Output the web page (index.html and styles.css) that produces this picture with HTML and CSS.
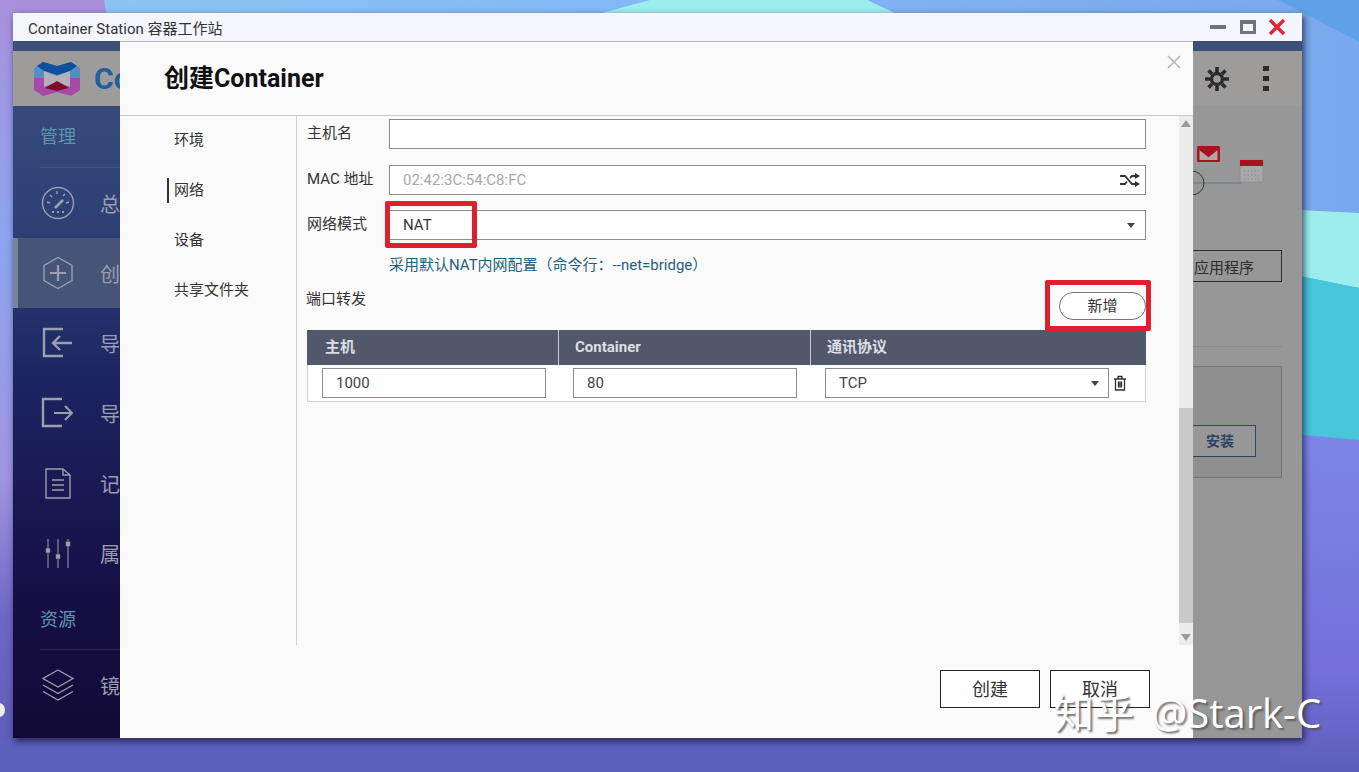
FILE: index.html
```html
<!DOCTYPE html>
<html lang="zh">
<head>
<meta charset="utf-8">
<title>Container Station</title>
<link rel="stylesheet" href="styles.css">
</head>
<body>
<div class="desktop">
  <svg class="wallpaper" viewBox="0 0 1359 772" preserveAspectRatio="none">
    <defs>
      <linearGradient id="wl" x1="0" y1="0" x2="0" y2="1">
        <stop offset="0" stop-color="#a98fdc"/>
        <stop offset=".3" stop-color="#8ca4f0"/>
        <stop offset=".62" stop-color="#a094e0"/>
        <stop offset=".8" stop-color="#6e66c6"/>
        <stop offset="1" stop-color="#5a5cb8"/>
      </linearGradient>
      <linearGradient id="wt" x1="0" y1="0" x2="1" y2="0">
        <stop offset="0" stop-color="#8cc4f4"/>
        <stop offset=".4" stop-color="#84b8f4"/>
        <stop offset="1" stop-color="#7aa8ec"/>
      </linearGradient>
      <linearGradient id="wb" x1="0" y1="0" x2="0" y2="1">
        <stop offset="0" stop-color="#7c86e6"/>
        <stop offset=".7" stop-color="#7570da"/>
        <stop offset="1" stop-color="#5d5ebc"/>
      </linearGradient>
    </defs>
    <rect width="1359" height="772" fill="url(#wl)"/>
    <polygon points="104,0 1359,0 1359,500 200,500" fill="url(#wt)"/>
    <polygon points="650,0 867,0 897,14 598,14" fill="#9ceeee"/>
    <polygon points="1278,0 1359,0 1359,42 1302,12" fill="#5fa0e8"/>
    <polygon points="1280,209 1359,213 1359,288 1280,272" fill="#9ceeee"/>
    <polygon points="1280,272 1359,288 1359,440 1280,433" fill="#48c6da"/>
    <polygon points="1280,433 1359,440 1359,772 1280,772" fill="url(#wb)"/>
    <rect y="738" width="1280" height="34" fill="#5d60bc"/>
  </svg>

  <div class="window">
    <header class="titlebar">
      <span class="title">Container Station 容器工作站</span>
      <div class="win-controls">
        <svg class="wc" viewBox="0 0 20 20"><rect x="1" y="8" width="16" height="4" fill="#6f7480"/></svg>
        <svg class="wc" viewBox="0 0 20 20"><path d="M2 3h16v14H2z M5 7v7h10V7z" fill="#6f7480" fill-rule="evenodd"/></svg>
        <svg class="wc" viewBox="0 0 20 20"><path d="M3 3l14 14M17 3L3 17" stroke="#e2252f" stroke-width="3.4" fill="none"/></svg>
      </div>
    </header>

    <div class="app">
      <aside class="sidebar">
        <div class="side-head">管理</div>
        <div class="side-item"><svg class="si" viewBox="0 0 36 36"><circle cx="18" cy="18" r="15.500"/><path d="M15 23l8-8" stroke-width="2.600"/><path d="M7 17l3 1M10 10l2 2M17 6v3M25 9l-2 2M29 17l-3 1"/><path d="M12 27h2M17 27h2M22 27h2" stroke-width="2"/></svg><span>总览</span></div>
        <div class="side-item active"><svg class="si" viewBox="0 0 36 36"><path d="M18 2.500l14 8v15l-14 8-14-8v-15z"/><path d="M18 10v16M10 18h16" stroke-width="2.200"/></svg><span>创建</span></div>
        <div class="side-item"><svg class="si" viewBox="0 0 36 36"><path d="M23 4H4v27h19" stroke-width="2.400"/><path d="M32 18H13M20 11l-7 7 7 7" stroke-width="2.400"/></svg><span>导入</span></div>
        <div class="side-item"><svg class="si" viewBox="0 0 36 36"><path d="M22 4H3v27h19" stroke-width="2.400"/><path d="M14 18h18M25 11l7 7-7 7" stroke-width="2"/></svg><span>导出</span></div>
        <div class="side-item"><svg class="si" viewBox="0 0 36 36"><path d="M6 4h17l7 6v23H6z"/><path d="M23 4v6h7"/><path d="M12 15h12M12 20h12M12 25h12"/></svg><span>记录</span></div>
        <div class="side-item"><svg class="si" viewBox="0 0 36 36"><path d="M8 4v9M8 18v15M18 4v15M18 24v9M28 4v3M28 11v22" stroke-width="1"/><path d="M6.500 14h3v3h-3zM16.500 20h3v3h-3zM26.500 7.500h3v3h-3z" fill="#9a9eae"/></svg><span>属性</span></div>
        <div class="side-head res">资源</div>
        <div class="side-item"><svg class="si" viewBox="0 0 36 36"><path d="M18 3l15 8.500-15 8.500L3 11.500z"/><path d="M3 18l15 8.500L33 18M3 24.500L18 33l15-8.500"/></svg><span>镜像</span></div>
      </aside>

      <main class="main">
        <div class="main-strip"></div>
        <div class="main-head">
          <svg class="logo" viewBox="0 0 46 34">
            <path d="M0 6l9-6 14 4 14-4 9 6v10H0z" fill="#5a8cc4"/>
            <path d="M0 16h46v12l-9 6-14-4-14 4-9-6z" fill="#a64aa8"/>
            <path d="M3 4l6-4 14 4 14-4 6 4-7 5-13 4-13-4z" fill="#0d4f9c"/>
            <path d="M10 9l13 5 13-5v16l-13-5-13 5z" fill="#b5b0b8"/>
            <path d="M11 26l12-7 12 7-12 3z" fill="#7d0b2f"/>
          </svg>
          <span class="brand">Container Station</span>
          <svg class="gear" viewBox="0 0 26 26"><path d="M13 7.500a5.500 5.500 0 1 0 0 11 5.500 5.500 0 0 0 0-11z" fill="none" stroke="#2b2b2d" stroke-width="3.400"/><path d="M13 1v5M13 20v5M1 13h5M20 13h5M4.500 4.500l3.500 3.500M18 18l3.500 3.500M21.500 4.500L18 8M8 18l-3.500 3.500" stroke="#2b2b2d" stroke-width="3.600"/></svg>
          <div class="kebab"><i></i><i></i><i></i></div>
        </div>
        <div class="main-body">
          <div class="flow-icons">
            <svg class="flow-svg" viewBox="0 0 80 50">
              <path d="M0 38h50" stroke="#5c7d8c" fill="none"/>
              <path d="M1 26a12 12 0 0 1 0 24" stroke="#333" fill="none"/>
              <rect x="6" y="1" width="23" height="16" rx="1.500" fill="#a7141e"/>
              <path d="M8.500 4l9 6.500 9-6.500v11h-18z" fill="#b3a6a6"/>
              <path d="M8.500 4l9 7 9-7" fill="none" stroke="#a7141e" stroke-width="2"/>
              <rect x="49" y="15" width="23" height="22" fill="#a8a8ac" stroke="#8f9096"/>
              <rect x="49" y="15" width="23" height="6" fill="#a7141e"/>
              <path d="M53 26h15M53 30h15M53 34h15" stroke="#888" stroke-dasharray="1.500 2"/>
            </svg>
          </div>
          <button class="ghost-btn" type="button">应用程序</button>
          <div class="rule"></div>
          <div class="card"><button class="install-btn" type="button">安装</button></div>
        </div>
      </main>

      <section class="modal">
        <header class="modal-head">
          <h1>创建Container</h1>
          <svg class="modal-close" viewBox="0 0 14 14"><path d="M1 1l12 12M13 1L1 13" stroke="#b4b4b4" stroke-width="1.500"/></svg>
        </header>
        <div class="modal-body">
          <nav class="tabs">
            <a>环境</a>
            <a class="on">网络</a>
            <a>设备</a>
            <a>共享文件夹</a>
          </nav>
          <div class="content">
            <div class="form-row first">
              <label>主机名</label>
              <div class="field"></div>
            </div>
            <div class="form-row mac">
              <label>MAC 地址</label>
              <div class="field muted">02:42:3C:54:C8:FC
                <svg class="shuffle" viewBox="0 0 20 14"><path d="M0 3h5l7 8h4M0 11h5l2-2.500M10 5l2-2h4" stroke="#333" stroke-width="1.800" fill="none"/><path d="M15 0l5 3-5 3zM15 8l5 3-5 3z" fill="#333"/></svg>
              </div>
            </div>
            <div class="form-row">
              <label>网络模式</label>
              <div class="field nat">NAT<i class="caret"></i></div>
            </div>
            <p class="hint">采用默认NAT内网配置（命令行：--net=bridge）</p>
            <div class="port-head">
              <span>端口转发</span>
              <button class="pill" type="button">新增</button>
            </div>
            <div class="table">
              <div class="thead">
                <div>主机</div>
                <div>Container</div>
                <div>通讯协议</div>
              </div>
              <div class="trow">
                <div class="cell"><div class="cell-input">1000</div></div>
                <div class="cell"><div class="cell-input">80</div></div>
                <div class="cell proto">
                  <div class="cell-input select">TCP<i class="caret"></i></div>
                  <svg class="trash" viewBox="0 0 14 16"><path d="M1 4h12M5 4V1.500h4V4M2.500 4v11h9V4M5.500 6.500v6M7 6.500v6M8.500 6.500v6" stroke="#333" stroke-width="1.300" fill="none"/></svg>
                </div>
              </div>
            </div>
          </div>
          <div class="scrollbar">
            <i class="arrow up"></i>
            <div class="track"><div class="thumb"></div></div>
            <i class="arrow down"></i>
          </div>
        </div>
        <footer class="modal-foot">
          <button class="foot-btn" type="button">创建</button>
          <button class="foot-btn" type="button">取消</button>
        </footer>
      </section>
    </div>
  </div>

  <div class="mark mark-nat"></div>
  <div class="mark mark-add"></div>
  <div class="watermark">知乎 @Stark-C</div>
  <div class="cursor-blob"></div>
</div>
</body>
</html>
```
FILE: styles.css
```css
* { box-sizing: border-box; }
html, body { margin: 0; padding: 0; }
body { font-family: Roboto, "Noto Sans CJK SC", sans-serif; color: #333; }

.desktop { position: relative; width: 1359px; height: 772px; overflow: hidden; background: #5d60bc; }
.wallpaper { position: absolute; inset: 0; width: 1359px; height: 772px; }

.window {
  position: absolute; left: 13px; top: 13px; width: 1289px; height: 725px;
  display: flex; flex-direction: column;
  box-shadow: 2px 3px 7px rgba(10, 10, 40, .7);
}
.titlebar {
  height: 28px; flex: none; display: flex; align-items: center; justify-content: space-between;
  padding: 0 15px 0 15px; background: #f3f6fc;
}
.title { font-size: 15px; color: #333; }
.win-controls { display: flex; gap: 9px; align-items: center; }
.wc { width: 20px; height: 20px; }

.app { position: relative; flex: 1; display: flex; min-height: 0; overflow: hidden; }

.sidebar {
  width: 120px; flex: none; overflow: hidden; white-space: nowrap;
  background: linear-gradient(#3c4f7e 0, #2c3f74 28%, #1c2360 50%, #160f45 80%, #120a35 100%);
  padding-top: 65px;
}
.side-head {
  height: 62px; margin-left: 27px; padding-top: 16px; font-size: 18px; line-height: 30px;
  color: #5f93b0; border-bottom: 1px solid rgba(255,255,255,.1);
}
.side-head.res { height: 62px; padding-top: 17px; }
.side-item {
  height: 70px; display: flex; align-items: center; padding-left: 27px; gap: 24px;
  font-size: 20px; color: #9a9eae;
}
.side-item.active { background: #465478; border-left: 5px solid #76849e; padding-left: 22px; }
.si { width: 36px; height: 36px; flex: none; fill: none; stroke: #9a9eae; stroke-width: 1.400; }

.main { flex: 1; display: flex; flex-direction: column; background: #979797; min-width: 0; }
.main-strip { height: 10px; flex: none; background: #3e4f78; margin-left: -120px; }
.main-head {
  height: 55px; flex: none; background: #9e9c9b; display: flex; align-items: center; position: relative;
  padding-right: 33px; margin-left: -120px;
}
.logo { width: 46px; height: 34px; margin-left: 21px; flex: none; }
.brand { margin-left: 14px; font-size: 30px; font-weight: 700; color: #1d5f9f; white-space: nowrap; }
.gear { width: 26px; height: 26px; margin-left: auto; }
.kebab { width: 6px; margin-left: 33px; display: flex; flex-direction: column; gap: 5px; }
.kebab i { display: block; width: 6px; height: 5px; background: #2b2b2d; }

.main-body { flex: 1; display: flex; flex-direction: column; align-items: flex-end; padding-right: 20px; }
.flow-icons { height: 53px; margin-top: 39px; width: 89px; }
.flow-svg { width: 80px; height: 50px; display: block; margin-left: -2px; }
.ghost-btn {
  width: 160px; height: 32px; margin-top: 52px; background: transparent; border: 1px solid #2c2c2c;
  font: 15px Roboto, "Noto Sans CJK SC", sans-serif; color: #2c2c2c; text-align: right; padding: 0 27px 0 0;
}
.rule { width: 160px; height: 1px; background: #8a8a8a; margin-top: 64px; }
.card {
  width: 160px; height: 112px; margin-top: 19px; background: #8f8f8f; border: 1px solid #70727a;
  display: flex; align-items: flex-end; justify-content: flex-end; padding: 0 25px 20px 0;
}
.install-btn {
  width: 72px; height: 32px; background: #979797; border: 1px solid #2f4368; padding: 0 0 2px;
  font: 700 14px Roboto, "Noto Sans CJK SC", sans-serif; color: #2f4368;
}

.modal {
  position: absolute; left: 107px; top: 0; width: 1073px; height: 697px;
  background: #fafafa; border-top: 1px solid #b5b5b5; display: flex; flex-direction: column;
}
.modal-head {
  height: 74px; flex: none; position: relative; display: flex; align-items: center; padding: 1px 0 0 44px;
  border-bottom: 1px solid #c8c8c8;
}
.modal-head h1 { margin: 0; font-size: 25px; font-weight: 700; color: #111; line-height: 30px; }
.modal-close { position: absolute; right: 12px; top: 13px; width: 14px; height: 14px; }

.modal-body { flex: none; height: 529px; display: flex; }
.tabs {
  width: 177px; flex: none; border-right: 1px solid #d0d0d0; padding-top: 1px;
  display: flex; flex-direction: column;
}
.tabs a {
  height: 50px; padding-left: 54px; font-size: 15px; line-height: 46px; color: #333; position: relative;
}
.tabs a.on::before {
  content: ""; position: absolute; left: 47px; top: 11px; width: 2px; height: 25px; background: #333;
}
.content { flex: 1; min-width: 0; padding: 3px 33px 0 10px; }
.form-row { display: flex; align-items: flex-start; margin-top: 15px; }
.form-row.first { margin-top: 0; }
.form-row.mac { margin-top: 16px; }
.form-row label { width: 82px; flex: none; font-size: 15px; line-height: 20px; padding-top: 4px; color: #333; }
.field {
  flex: 1; height: 30px; background: #fff; border: 1px solid #8c8c8c; padding: 0 13px;
  font-size: 15px; line-height: 28px; color: #333; position: relative;
}
.field.muted { color: #a8a8a8; }
.field.nat { line-height: 29px; }
.shuffle { position: absolute; right: 5px; top: 7px; width: 20px; height: 14px; }
.caret {
  position: absolute; right: 10px; top: 12px; width: 0; height: 0;
  border: 4px solid transparent; border-top: 5px solid #444; border-bottom: 0;
}
.hint { margin: 15px 0 0 82px; font-size: 15px; line-height: 20px; color: #1f5f80; }
.port-head { display: flex; justify-content: space-between; height: 28px; margin-top: 17px; font-size: 15px; line-height: 20px; }
.port-head span { margin-top: -3px; margin-left: -1px; }
.pill {
  width: 87px; height: 28px; border: 1px solid #777; border-radius: 14px; background: #fff;
  font: 15px Roboto, "Noto Sans CJK SC", sans-serif; color: #333; padding: 0 0 3px;
}
.table { margin-top: 10px; }
.thead { display: grid; grid-template-columns: 252px 252px 1fr; height: 35px; background: #50586a; }
.thead div {
  font-size: 15px; font-weight: 700; line-height: 34px; color: #dcdfe4; padding-left: 18px;
  border-right: 1px solid #c7ccd4;
}
.thead div:nth-child(2) { padding-left: 16px; }
.thead div:last-child { border-right: 0; padding-left: 16px; }
.trow {
  display: grid; grid-template-columns: 252px 252px 1fr; height: 37px; background: #fff;
  border: 1px solid #cfcfcf; border-top: 0; padding-top: 3px;
}
.cell { padding-left: 14px; }
.cell + .cell { padding-left: 13px; }
.cell-input {
  width: 224px; height: 30px; border: 1px solid #8c8c8c; background: #fff; padding-left: 13px;
  font-size: 15px; line-height: 28px; color: #444; position: relative;
}
.proto { display: flex; align-items: flex-start; gap: 4px; }
.cell-input.select { width: 284px; flex: none; }
.cell-input.select .caret { right: 9px; }
.trash { width: 14px; height: 16px; margin-top: 7px; flex: none; }

.scrollbar { width: 14px; flex: none; margin-left: auto; background: #ececec; display: flex; flex-direction: column; }
.arrow { height: 15px; flex: none; position: relative; display: block; }
.arrow::after { content: ""; position: absolute; left: 2px; top: 4px; border: 5px solid transparent; }
.arrow.up::after { border-bottom: 7px solid #9a9a9a; border-top: 0; }
.arrow.down::after { border-top: 7px solid #9a9a9a; border-bottom: 0; }
.track { flex: 1; padding-top: 277px; }
.thumb { height: 215px; background: #c9c9c9; }

.modal-foot { flex: 1; display: flex; justify-content: flex-end; gap: 10px; padding: 25px 43px 0 0; }
.foot-btn {
  width: 100px; height: 38px; background: #fff; border: 1px solid #222; padding: 0 0 2px;
  font: 18px Roboto, "Noto Sans CJK SC", sans-serif; color: #333;
}

.mark { position: absolute; border: 5px solid #e01f2d; border-radius: 2px; }
.mark-nat { left: 385px; top: 201px; width: 92px; height: 47px; }
.mark-add { left: 1045px; top: 280px; width: 106px; height: 51px; }

.watermark {
  position: absolute; left: 1054px; top: 688px; font-family: "Open Sans", "Noto Sans CJK SC", sans-serif;
  font-size: 40px; word-spacing: 7px; line-height: 50px; color: #fff; white-space: nowrap;
  text-shadow: 2px 2px 2px rgba(80, 80, 80, .8);
}
.cursor-blob { position: absolute; left: -7px; top: 703px; width: 12px; height: 14px; border-radius: 50%; background: #eee; }
```
